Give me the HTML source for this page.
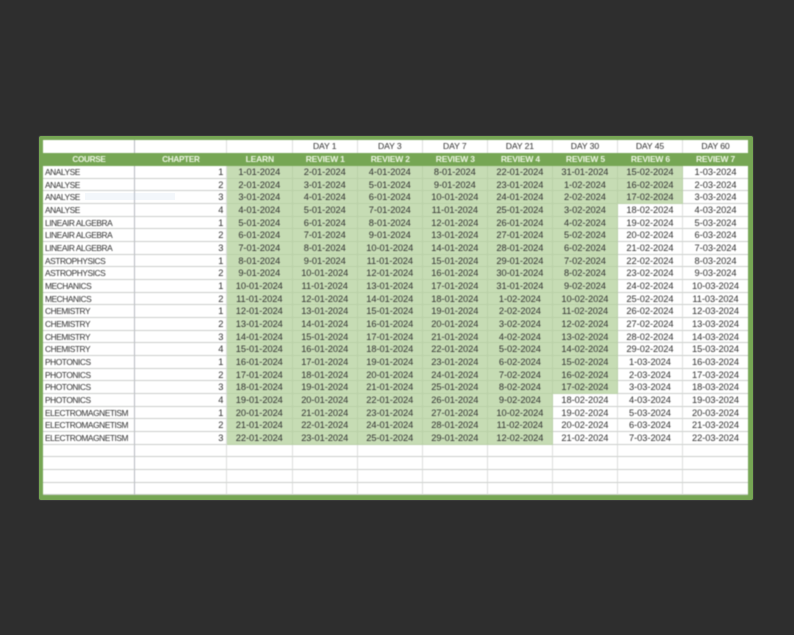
<!DOCTYPE html>
<html><head><meta charset="utf-8"><style>
html,body{margin:0;padding:0;width:794px;height:635px;overflow:hidden;background:#2e2e2e}
body{position:relative;font-family:"Liberation Sans",sans-serif}
#o{position:absolute;left:39px;top:136px;width:714px;height:364px;background:#76a654;border-radius:2px;box-shadow:0 0 0 1px #3a3a3a}
#t{position:absolute;left:43px;top:140px;width:705px;filter:blur(.4px);color:#2f2f2f}
.r{display:flex;height:12.68px;box-sizing:border-box}
.r>div{box-sizing:border-box;width:65.1px;height:100%;font-size:9.3px;letter-spacing:-.05px;line-height:13.4px;text-align:center;white-space:nowrap;background:#fff;border-bottom:1px solid #cbcecb;border-right:1px solid #dcdedc;overflow:hidden}
.r>div:nth-child(1){width:92px;text-align:left;padding-left:2px;font-size:8.4px;letter-spacing:-.45px;border-right-color:#b5b8c0}
.r>div:nth-child(2){width:92px;text-align:right;padding-right:2.5px;border-right-color:#dcdedc}
.r>div:nth-child(3){width:65.9px}
.r>div:nth-child(10){width:65.1px;border-right:0}
.r>div.g{background:#c6dcb4;border-color:#b9d0a7}
.h1{height:13px!important}
.h1>div{font-size:8.6px!important;letter-spacing:-.1px!important;line-height:13px!important;border-bottom:0!important;text-align:center!important;padding:0!important}
.h2{height:13px!important}
.h2>div{background:#76a654!important;border:0!important;color:#eef6e4;font-weight:bold;font-size:8.5px!important;letter-spacing:-.2px!important;line-height:13.5px!important;text-align:center!important;padding:0!important}
.h2>div:nth-child(-n+2){font-size:8.2px!important;letter-spacing:-.3px!important}
#w{position:absolute;left:85px;top:193px;width:90px;height:7px;background:rgba(190,210,235,.18)}
</style></head><body>
<div id="o"></div>
<div id="t">
<div class="r h1"><div></div><div></div><div></div><div>DAY 1</div><div>DAY 3</div><div>DAY 7</div><div>DAY 21</div><div>DAY 30</div><div>DAY 45</div><div>DAY 60</div></div>
<div class="r h2"><div>COURSE</div><div>CHAPTER</div><div>LEARN</div><div>REVIEW 1</div><div>REVIEW 2</div><div>REVIEW 3</div><div>REVIEW 4</div><div>REVIEW 5</div><div>REVIEW 6</div><div>REVIEW 7</div></div>
<div class="r"><div>ANALYSE</div><div>1</div><div class="g">1-01-2024</div><div class="g">2-01-2024</div><div class="g">4-01-2024</div><div class="g">8-01-2024</div><div class="g">22-01-2024</div><div class="g">31-01-2024</div><div class="g">15-02-2024</div><div>1-03-2024</div></div>
<div class="r"><div>ANALYSE</div><div>2</div><div class="g">2-01-2024</div><div class="g">3-01-2024</div><div class="g">5-01-2024</div><div class="g">9-01-2024</div><div class="g">23-01-2024</div><div class="g">1-02-2024</div><div class="g">16-02-2024</div><div>2-03-2024</div></div>
<div class="r"><div>ANALYSE</div><div>3</div><div class="g">3-01-2024</div><div class="g">4-01-2024</div><div class="g">6-01-2024</div><div class="g">10-01-2024</div><div class="g">24-01-2024</div><div class="g">2-02-2024</div><div class="g">17-02-2024</div><div>3-03-2024</div></div>
<div class="r"><div>ANALYSE</div><div>4</div><div class="g">4-01-2024</div><div class="g">5-01-2024</div><div class="g">7-01-2024</div><div class="g">11-01-2024</div><div class="g">25-01-2024</div><div class="g">3-02-2024</div><div>18-02-2024</div><div>4-03-2024</div></div>
<div class="r"><div>LINEAIR ALGEBRA</div><div>1</div><div class="g">5-01-2024</div><div class="g">6-01-2024</div><div class="g">8-01-2024</div><div class="g">12-01-2024</div><div class="g">26-01-2024</div><div class="g">4-02-2024</div><div>19-02-2024</div><div>5-03-2024</div></div>
<div class="r"><div>LINEAIR ALGEBRA</div><div>2</div><div class="g">6-01-2024</div><div class="g">7-01-2024</div><div class="g">9-01-2024</div><div class="g">13-01-2024</div><div class="g">27-01-2024</div><div class="g">5-02-2024</div><div>20-02-2024</div><div>6-03-2024</div></div>
<div class="r"><div>LINEAIR ALGEBRA</div><div>3</div><div class="g">7-01-2024</div><div class="g">8-01-2024</div><div class="g">10-01-2024</div><div class="g">14-01-2024</div><div class="g">28-01-2024</div><div class="g">6-02-2024</div><div>21-02-2024</div><div>7-03-2024</div></div>
<div class="r"><div>ASTROPHYSICS</div><div>1</div><div class="g">8-01-2024</div><div class="g">9-01-2024</div><div class="g">11-01-2024</div><div class="g">15-01-2024</div><div class="g">29-01-2024</div><div class="g">7-02-2024</div><div>22-02-2024</div><div>8-03-2024</div></div>
<div class="r"><div>ASTROPHYSICS</div><div>2</div><div class="g">9-01-2024</div><div class="g">10-01-2024</div><div class="g">12-01-2024</div><div class="g">16-01-2024</div><div class="g">30-01-2024</div><div class="g">8-02-2024</div><div>23-02-2024</div><div>9-03-2024</div></div>
<div class="r"><div>MECHANICS</div><div>1</div><div class="g">10-01-2024</div><div class="g">11-01-2024</div><div class="g">13-01-2024</div><div class="g">17-01-2024</div><div class="g">31-01-2024</div><div class="g">9-02-2024</div><div>24-02-2024</div><div>10-03-2024</div></div>
<div class="r"><div>MECHANICS</div><div>2</div><div class="g">11-01-2024</div><div class="g">12-01-2024</div><div class="g">14-01-2024</div><div class="g">18-01-2024</div><div class="g">1-02-2024</div><div class="g">10-02-2024</div><div>25-02-2024</div><div>11-03-2024</div></div>
<div class="r"><div>CHEMISTRY</div><div>1</div><div class="g">12-01-2024</div><div class="g">13-01-2024</div><div class="g">15-01-2024</div><div class="g">19-01-2024</div><div class="g">2-02-2024</div><div class="g">11-02-2024</div><div>26-02-2024</div><div>12-03-2024</div></div>
<div class="r"><div>CHEMISTRY</div><div>2</div><div class="g">13-01-2024</div><div class="g">14-01-2024</div><div class="g">16-01-2024</div><div class="g">20-01-2024</div><div class="g">3-02-2024</div><div class="g">12-02-2024</div><div>27-02-2024</div><div>13-03-2024</div></div>
<div class="r"><div>CHEMISTRY</div><div>3</div><div class="g">14-01-2024</div><div class="g">15-01-2024</div><div class="g">17-01-2024</div><div class="g">21-01-2024</div><div class="g">4-02-2024</div><div class="g">13-02-2024</div><div>28-02-2024</div><div>14-03-2024</div></div>
<div class="r"><div>CHEMISTRY</div><div>4</div><div class="g">15-01-2024</div><div class="g">16-01-2024</div><div class="g">18-01-2024</div><div class="g">22-01-2024</div><div class="g">5-02-2024</div><div class="g">14-02-2024</div><div>29-02-2024</div><div>15-03-2024</div></div>
<div class="r"><div>PHOTONICS</div><div>1</div><div class="g">16-01-2024</div><div class="g">17-01-2024</div><div class="g">19-01-2024</div><div class="g">23-01-2024</div><div class="g">6-02-2024</div><div class="g">15-02-2024</div><div>1-03-2024</div><div>16-03-2024</div></div>
<div class="r"><div>PHOTONICS</div><div>2</div><div class="g">17-01-2024</div><div class="g">18-01-2024</div><div class="g">20-01-2024</div><div class="g">24-01-2024</div><div class="g">7-02-2024</div><div class="g">16-02-2024</div><div>2-03-2024</div><div>17-03-2024</div></div>
<div class="r"><div>PHOTONICS</div><div>3</div><div class="g">18-01-2024</div><div class="g">19-01-2024</div><div class="g">21-01-2024</div><div class="g">25-01-2024</div><div class="g">8-02-2024</div><div class="g">17-02-2024</div><div>3-03-2024</div><div>18-03-2024</div></div>
<div class="r"><div>PHOTONICS</div><div>4</div><div class="g">19-01-2024</div><div class="g">20-01-2024</div><div class="g">22-01-2024</div><div class="g">26-01-2024</div><div class="g">9-02-2024</div><div>18-02-2024</div><div>4-03-2024</div><div>19-03-2024</div></div>
<div class="r"><div>ELECTROMAGNETISM</div><div>1</div><div class="g">20-01-2024</div><div class="g">21-01-2024</div><div class="g">23-01-2024</div><div class="g">27-01-2024</div><div class="g">10-02-2024</div><div>19-02-2024</div><div>5-03-2024</div><div>20-03-2024</div></div>
<div class="r"><div>ELECTROMAGNETISM</div><div>2</div><div class="g">21-01-2024</div><div class="g">22-01-2024</div><div class="g">24-01-2024</div><div class="g">28-01-2024</div><div class="g">11-02-2024</div><div>20-02-2024</div><div>6-03-2024</div><div>21-03-2024</div></div>
<div class="r"><div>ELECTROMAGNETISM</div><div>3</div><div class="g">22-01-2024</div><div class="g">23-01-2024</div><div class="g">25-01-2024</div><div class="g">29-01-2024</div><div class="g">12-02-2024</div><div>21-02-2024</div><div>7-03-2024</div><div>22-03-2024</div></div>
<div class="r"><div></div><div></div><div></div><div></div><div></div><div></div><div></div><div></div><div></div><div></div></div>
<div class="r"><div></div><div></div><div></div><div></div><div></div><div></div><div></div><div></div><div></div><div></div></div>
<div class="r"><div></div><div></div><div></div><div></div><div></div><div></div><div></div><div></div><div></div><div></div></div>
<div class="r"><div></div><div></div><div></div><div></div><div></div><div></div><div></div><div></div><div></div><div></div></div>
</div>
<div id="w"></div>
</body></html>
